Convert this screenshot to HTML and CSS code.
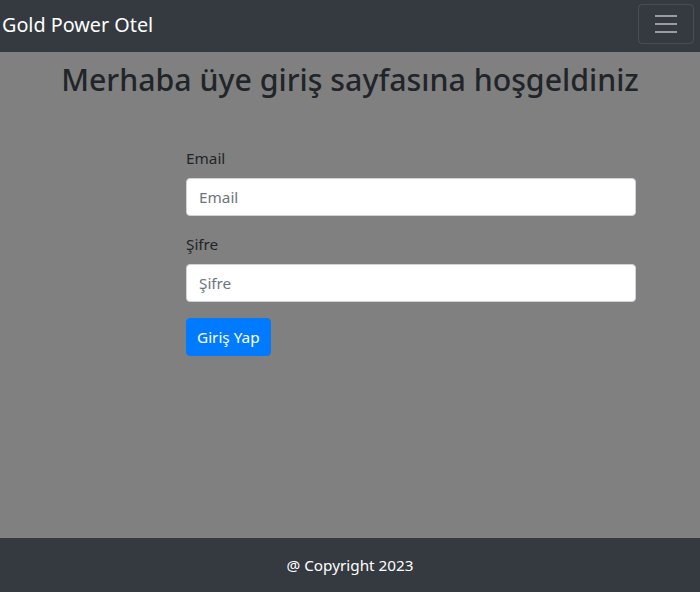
FILE: index.html
```html
<!DOCTYPE html>
<html lang="tr">
<head>
<meta charset="utf-8">
<title>Gold Power Otel</title>
<link rel="stylesheet" href="styles.css">
</head>
<body>
<div class="page">
  <nav class="navbar">
    <a class="brand" href="#">Gold Power Otel</a>
    <button class="toggler" type="button" aria-label="Menü">
      <svg width="30" height="30" viewBox="0 0 30 30"><path d="M4 7h22M4 15h22M4 23h22" stroke="rgba(255,255,255,0.5)" stroke-width="2" fill="none"/></svg>
    </button>
  </nav>
  <main class="main">
    <h2 class="title">Merhaba üye giriş sayfasına hoşgeldiniz</h2>
    <form class="login">
      <div class="group">
        <label class="label" for="email">Email</label>
        <input class="input" id="email" type="email" placeholder="Email">
      </div>
      <div class="group">
        <label class="label" for="sifre">Şifre</label>
        <input class="input" id="sifre" type="password" placeholder="Şifre">
      </div>
      <button class="btn" type="submit">Giriş Yap</button>
    </form>
  </main>
  <footer class="footer">@ Copyright 2023</footer>
</div>
</body>
</html>
```

FILE: styles.css
```css
* { box-sizing: border-box; }
html, body { margin: 0; height: 100%; }
body {
  font-family: "Noto Sans", "Open Sans", sans-serif;
  font-size: 15.3px;
  line-height: 24px;
  color: #212529;
  background: #808080;
}
.page { display: flex; flex-direction: column; min-height: 100vh; }
.navbar {
  height: 52px;
  background: #343a40;
  display: flex;
  justify-content: space-between;
  align-items: flex-start;
  padding: 4px 6px 0 2px;
}
.brand {
  color: #fff;
  font-size: 19.8px;
  line-height: 30px;
  margin-top: 6px;
  text-decoration: none;
}
.toggler {
  width: 56px; height: 40px;
  padding: 0;
  display: flex; align-items: center; justify-content: center;
  background: transparent;
  border: 1px solid rgba(255,255,255,0.1);
  border-radius: 4px;
}
.main { flex: 1; }
.title {
  margin: 9px 0 0;
  text-align: center;
  font-size: 30.3px;
  font-weight: 500;
  line-height: 38px;
}
.login { width: 450px; margin: 47px 0 0 186px; }
.group { margin-bottom: 16px; }
.label { display: block; margin-bottom: 8px; }
.input {
  display: block;
  width: 100%;
  height: 38px;
  padding: 6px 12px;
  font: inherit;
  color: #495057;
  background: #fff;
  border: 1px solid #ced4da;
  border-radius: 4px;
}
.input::placeholder { color: #6c757d; }
.btn {
  font: inherit;
  color: #fff;
  background: #007bff;
  border: 1px solid #007bff;
  border-radius: 4px;
  padding: 6px 10px;
  height: 38px;
}
.footer {
  height: 54px;
  background: #343a40;
  color: #fff;
  display: flex;
  align-items: center;
  justify-content: center;
}
```
